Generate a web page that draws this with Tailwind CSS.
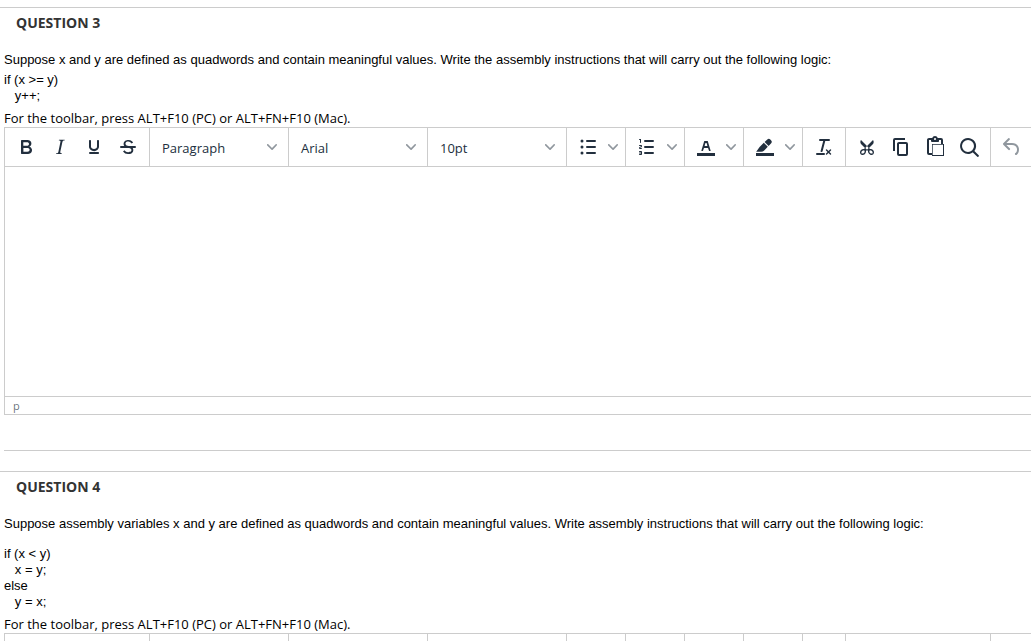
<!DOCTYPE html>
<html lang="en">
<head>
<meta charset="utf-8">
<title>Test questions</title>
<script src="https://cdn.jsdelivr.net/npm/@tailwindcss/browser@4"></script>
</head>
<body class="h-screen overflow-hidden bg-white font-['Open_Sans','Noto_Sans',sans-serif] text-[13px] text-black">

<svg class="hidden" aria-hidden="true">
  <symbol id="bold" viewBox="0 0 24 24"><path fill-rule="evenodd" d="M7.8 19c-.3 0-.5 0-.6-.2l-.2-.5V5.7c0-.2 0-.4.2-.5l.6-.2h5c1.5 0 2.7.3 3.5 1 .7.6 1.1 1.4 1.1 2.5a3 3 0 01-.6 1.9c-.4.6-1 1-1.6 1.2.4.1.9.3 1.3.6s.8.7 1 1.2c.4.4.5 1 .5 1.6 0 1.3-.4 2.3-1.3 3-.8.7-2.1 1-3.8 1H7.8zm5-8.3c.6 0 1.2-.1 1.6-.5.4-.3.6-.7.6-1.3 0-1.1-.8-1.7-2.3-1.7H9.3v3.5h3.4zm.5 6c.7 0 1.3-.1 1.7-.4.4-.4.6-.9.6-1.5s-.2-1-.7-1.4c-.4-.3-1-.4-2-.4H9.4v3.8h4z"/></symbol>
  <symbol id="italic" viewBox="0 0 24 24"><path fill-rule="evenodd" d="M16.7 4.7l-.1.9h-.3c-.6 0-1 0-1.4.3-.3.3-.4.6-.5 1.1l-2.1 9.8v.6c0 .5.4.8 1.4.8h.2l-.2.8H8l.2-.8h.2c1.1 0 1.8-.5 2-1.5l2-9.8.1-.5c0-.6-.4-.8-1.4-.8h-.3l.2-.9h5.8z"/></symbol>
  <symbol id="underline" viewBox="0 0 24 24"><path fill-rule="evenodd" d="M16 5c.6 0 1 .4 1 1v5.5a4 4 0 01-.4 1.8l-1 1.4a5.3 5.3 0 01-5.5 1 5 5 0 01-1.6-1c-.5-.4-.8-.9-1.1-1.4a4 4 0 01-.4-1.8V6c0-.6.4-1 1-1s1 .4 1 1v5.5c0 .3 0 .6.2 1l.6.7a3.3 3.3 0 002.2.8 3.4 3.4 0 002.2-.8c.3-.2.4-.5.6-.8l.2-.9V6c0-.6.4-1 1-1zM8 17h8c.6 0 1 .4 1 1s-.4 1-1 1H8a1 1 0 010-2z"/></symbol>
  <symbol id="strike" viewBox="0 0 24 24"><path d="M15.6 8.5c-.5-.7-1-1.1-1.3-1.3-.6-.4-1.3-.6-2-.6-2.7 0-2.8 1.7-2.8 2.1 0 1.6 1.8 2 3.2 2.3 4.4.9 4.6 2.8 4.6 3.9 0 1.4-.7 4.1-5 4.1A6.2 6.2 0 017 16.4l1.5-1.1c.4.6 1.6 2 3.7 2 1.6 0 2.5-.4 3-1.2.4-.8.3-2-.8-2.6-.7-.4-1.6-.7-2.9-1-1-.2-3.9-.8-3.9-3.6C7.6 6 10.3 5 12.4 5c2.9 0 4.2 1.6 4.7 2.4l-1.5 1.1z"/><path d="M5 11h14a1 1 0 010 2H5a1 1 0 010-2z"/></symbol>
  <symbol id="bullets" viewBox="0 0 24 24"><path d="M11 5h8a1 1 0 010 2h-8a1 1 0 010-2zm0 6h8a1 1 0 010 2h-8a1 1 0 010-2zm0 6h8a1 1 0 010 2h-8a1 1 0 010-2z"/><circle cx="6" cy="6" r="1.5"/><circle cx="6" cy="12" r="1.5"/><circle cx="6" cy="18" r="1.5"/></symbol>
  <symbol id="numbers" viewBox="0 0 24 24"><path fill-rule="evenodd" d="M10 17h8a1 1 0 010 2h-8a1 1 0 010-2zm0-6h8a1 1 0 010 2h-8a1 1 0 010-2zm0-6h8a1 1 0 010 2h-8a1 1 0 010-2zM6 4v3.5c0 .3-.2.5-.5.5a.5.5 0 01-.5-.5V5h-.5a.5.5 0 010-1H6zm-1 8.8l.2.2h1.3c.3 0 .5.2.5.5s-.2.5-.5.5H4.9a1 1 0 01-.9-1V13c0-.4.3-.8.6-1l1.2-.4.2-.3a.2.2 0 00-.2-.2H4.5a.5.5 0 01-.5-.5c0-.3.2-.5.5-.5h1.6c.5 0 .9.4.9 1v.1c0 .4-.3.8-.6 1l-1.2.4-.2.3zM7 17v2c0 .6-.4 1-1 1H4.5a.5.5 0 010-1h1.2c.2 0 .3-.1.3-.3 0-.2-.1-.3-.3-.3H4.4a.4.4 0 110-.8h1.3c.2 0 .3-.1.3-.3 0-.2-.1-.3-.3-.3H4.5a.5.5 0 110-1H6c.6 0 1 .4 1 1z"/></symbol>
  <symbol id="color" viewBox="0 0 24 24"><path fill-rule="evenodd" d="M3 18h18v3H3zM8.7 16h-.8a.5.5 0 01-.5-.6l2.7-9c.1-.3.3-.4.5-.4h2.8c.2 0 .4.1.5.4l2.7 9a.5.5 0 01-.5.6h-.8a.5.5 0 01-.4-.4l-.7-2.2c0-.3-.3-.4-.5-.4h-3.4c-.2 0-.4.1-.5.4l-.7 2.2c0 .3-.2.4-.4.4zm2.6-7.6l-.6 2a.5.5 0 00.5.6h1.6a.5.5 0 00.5-.6l-.6-2c0-.3-.3-.4-.5-.4h-.4c-.2 0-.4.1-.5.4z"/></symbol>
  <symbol id="highlight" viewBox="0 0 24 24"><path d="M3 18h18v3H3zM3.2 16.8l3.4-4.8 4.2-4.2 4 4-3.6 3.8c-.8.8-1.800 1.200-3 1.200zM11.600 7l2.700-2.500a2.200 2.200 0 013 0l.9.9c.8.8.8 2.100 0 2.900L15.600 11z"/></symbol>
  <symbol id="clear" viewBox="0 0 24 24"><path fill-rule="evenodd" d="M13.2 6a1 1 0 010 .2l-2.6 10a1 1 0 01-1 .8h-.2a.8.8 0 01-.8-1l2.6-10H8a1 1 0 110-2h9a1 1 0 010 2h-3.8zM5 18h7a1 1 0 010 2H5a1 1 0 010-2zm13 1.5L16.5 18 15 19.5a.7.7 0 01-1-1l1.5-1.5-1.5-1.5a.7.7 0 011-1l1.5 1.5 1.5-1.5a.7.7 0 011 1L17.5 17l1.5 1.5a.7.7 0 01-1 1z"/></symbol>
  <symbol id="cut" viewBox="0 0 24 24"><path fill-rule="evenodd" d="M18 15c.6.7 1 1.4 1 2.3 0 .8-.2 1.5-.7 2l-.8.5-1 .2c-.4 0-.8 0-1.2-.3a3.9 3.9 0 01-2.1-2.2c-.2-.5-.3-1-.2-1.5l-1-1-1 1c0 .5 0 1-.2 1.5-.1.5-.4 1-.9 1.4-.3.4-.7.6-1.2.8l-1.2.3c-.4 0-.7 0-1-.2-.3 0-.6-.3-.8-.5-.5-.5-.8-1.2-.7-2 0-.9.4-1.6 1-2.2A3.7 3.7 0 018.6 14H9l1-1-4-4-.5-1a3.3 3.3 0 010-2c0-.4.3-.7.5-1l6 6 6-6 .5 1a3.3 3.3 0 010 2c0 .4-.3.7-.5 1l-4 4 1 1h.5c.4 0 .8 0 1.2.3.5.2.9.4 1.2.8zm-8.5 2.2l.1-.4v-.3-.4a1 1 0 00-.2-.5 1 1 0 00-.4-.2 1.6 1.6 0 00-.8 0 2.6 2.6 0 00-.8.3 2.5 2.5 0 00-.9 1.1l-.1.4v.7l.2.5.5.2h.7a2.5 2.5 0 00.8-.3 2.8 2.8 0 001-1zm2.5-2.8c.4 0 .7-.1 1-.4.3-.3.4-.6.4-1s-.1-.7-.4-1c-.3-.3-.6-.4-1-.4s-.7.1-1 .4c-.3.3-.4.6-.4 1s.1.7.4 1c.3.3.6.4 1 .4zm5.4 4l.2-.5v-.4-.3a2.6 2.6 0 00-.3-.8 2.4 2.4 0 00-.7-.7 2.5 2.5 0 00-.8-.3 1.5 1.5 0 00-.8 0 1 1 0 00-.4.2 1 1 0 00-.2.5 1.5 1.5 0 000 .7v.4l.3.4.3.4a2.8 2.8 0 00.8.5l.4.1h.7l.5-.2z"/></symbol>
  <symbol id="copy" viewBox="0 0 24 24"><path fill-rule="evenodd" d="M16 3H6a2 2 0 00-2 2v11h2V5h10V3zm1 4a2 2 0 012 2v10a2 2 0 01-2 2h-7a2 2 0 01-2-2V9c0-1.2.9-2 2-2h7zm0 12V9h-7v10h7z"/></symbol>
  <symbol id="paste" viewBox="0 0 24 24"><path fill-rule="evenodd" d="M18 9V5h-2v1c0 .6-.4 1-1 1H9a1 1 0 01-1-1V5H6v13h3V9h9zM9 20H6a2 2 0 01-2-2V5c0-1.1.9-2 2-2h3.2A3 3 0 0112 1a3 3 0 012.800 2H18a2 2 0 012 2v4h1v12H9v-1zm.700-10.300V20H20V9.700H9.700zM12 3a1 1 0 00-1 1c0 .5.4 1 1 1s1-.5 1-1-.4-1-1-1z"/></symbol>
  <symbol id="search" viewBox="0 0 24 24"><path fill-rule="evenodd" d="M16 17.3a8 8 0 111.4-1.4l4.3 4.4a1 1 0 01-1.4 1.4l-4.4-4.3zm-5-.3a6 6 0 100-12 6 6 0 000 12z"/></symbol>
  <symbol id="undo" viewBox="0 0 24 24"><path d="M6.4 8H12c3.7 0 6.2 2 6.8 5.1.6 2.7-.4 5.6-2.3 6.8a1 1 0 01-1-1.8c1.1-.6 1.8-2.7 1.4-4.6-.5-2.1-2.1-3.5-4.9-3.5H6.4l3.3 3.3a1 1 0 11-1.4 1.4l-5-5a1 1 0 010-1.4l5-5a1 1 0 011.4 1.4L6.4 8z"/></symbol>
  <symbol id="chevron" viewBox="0 0 10 10"><path d="M8.7 2.2c.3-.3.8-.3 1 0 .4.4.4.9 0 1.2L5.7 7.8c-.3.3-.9.3-1.2 0L.2 3.4a.8.8 0 010-1.2c.3-.3.8-.3 1.1 0L5 6l3.7-3.8z"/></symbol>
</svg>

<main class="pt-[7px]">
  <section class="border-t border-[#ccc]">
    <h2 class="px-4 pt-1.5 text-sm leading-[18px] font-bold text-[#333]">QUESTION 3</h2>
    <div class="pl-1">
      <div class="pt-5 font-['Liberation_Sans',Arial,sans-serif] leading-4">
        <p>Suppose x and y are defined as quadwords and contain meaningful values. Write the assembly instructions that will carry out the following logic:</p>
        <p class="pt-1">if (x &gt;= y)<br>&nbsp;&nbsp; y++;</p>
      </div>
      <p class="pt-[5px] leading-[18px]">For the toolbar, press ALT+F10 (PC) or ALT+FN+F10 (Mac).</p>
      <div data-editor class="overflow-hidden border-y border-l border-[#ccc]">
        <div data-toolbar role="toolbar" aria-label="Formatting" class="flex divide-x divide-[#ccc] border-b border-[#ccc] text-[#222f3e] fill-[#222f3e]">
          <div class="flex h-[38px] shrink-0 px-1 py-0.5">
            <button aria-label="Bold" class="grid size-[34px] place-items-center"><svg class="size-6"><use href="#bold"/></svg></button>
            <button aria-label="Italic" class="grid size-[34px] place-items-center"><svg class="size-6"><use href="#italic"/></svg></button>
            <button aria-label="Underline" class="grid size-[34px] place-items-center"><svg class="size-6"><use href="#underline"/></svg></button>
            <button aria-label="Strikethrough" class="grid size-[34px] place-items-center"><svg class="size-6"><use href="#strike"/></svg></button>
          </div>
          <div class="shrink-0 px-1 py-0.5"><button aria-label="Blocks" class="flex h-[34px] w-[130px] items-center justify-between pr-[7px] pl-2"><span class="pt-1">Paragraph</span><svg class="size-[10px] fill-[#222f3e]/50"><use href="#chevron"/></svg></button></div>
          <div class="shrink-0 px-1 py-0.5"><button aria-label="Fonts" class="flex h-[34px] w-[130px] items-center justify-between pr-[7px] pl-2"><span class="pt-1">Arial</span><svg class="size-[10px] fill-[#222f3e]/50"><use href="#chevron"/></svg></button></div>
          <div class="shrink-0 px-1 py-0.5"><button aria-label="Font sizes" class="flex h-[34px] w-[130px] items-center justify-between pr-[7px] pl-2"><span class="pt-1">10pt</span><svg class="size-[10px] fill-[#222f3e]/50"><use href="#chevron"/></svg></button></div>
          <div class="flex shrink-0 px-1 py-0.5">
            <button aria-label="Bullet list" class="grid size-[34px] place-items-center"><svg class="size-6"><use href="#bullets"/></svg></button>
            <button aria-label="Bullet list styles" class="grid h-[34px] w-4 place-items-center"><svg class="size-[10px] fill-[#222f3e]/50"><use href="#chevron"/></svg></button>
          </div>
          <div class="flex shrink-0 px-1 py-0.5">
            <button aria-label="Numbered list" class="grid size-[34px] place-items-center"><svg class="size-6"><use href="#numbers"/></svg></button>
            <button aria-label="Numbered list styles" class="grid h-[34px] w-4 place-items-center"><svg class="size-[10px] fill-[#222f3e]/50"><use href="#chevron"/></svg></button>
          </div>
          <div class="flex shrink-0 px-1 py-0.5">
            <button aria-label="Text color" class="grid size-[34px] place-items-center"><svg class="size-6"><use href="#color"/></svg></button>
            <button aria-label="Text color choices" class="grid h-[34px] w-4 place-items-center"><svg class="size-[10px] fill-[#222f3e]/50"><use href="#chevron"/></svg></button>
          </div>
          <div class="flex shrink-0 px-1 py-0.5">
            <button aria-label="Highlight color" class="grid size-[34px] place-items-center"><svg class="size-6"><use href="#highlight"/></svg></button>
            <button aria-label="Highlight color choices" class="grid h-[34px] w-4 place-items-center"><svg class="size-[10px] fill-[#222f3e]/50"><use href="#chevron"/></svg></button>
          </div>
          <div class="flex shrink-0 px-1 py-0.5">
            <button aria-label="Clear formatting" class="grid size-[34px] place-items-center"><svg class="size-6"><use href="#clear"/></svg></button>
          </div>
          <div class="flex shrink-0 px-1 py-0.5">
            <button aria-label="Cut" class="grid size-[34px] place-items-center"><svg class="size-6"><use href="#cut"/></svg></button>
            <button aria-label="Copy" class="grid size-[34px] place-items-center"><svg class="size-6"><use href="#copy"/></svg></button>
            <button aria-label="Paste" class="grid size-[34px] place-items-center"><svg class="size-6"><use href="#paste"/></svg></button>
            <button aria-label="Find and replace" class="grid size-[34px] place-items-center"><svg class="size-6"><use href="#search"/></svg></button>
          </div>
          <div class="flex shrink-0 px-1 py-0.5">
            <button aria-label="Undo" disabled class="grid size-[34px] place-items-center"><svg class="size-6 fill-[#222f3e]/50"><use href="#undo"/></svg></button>
          </div>
        </div>
        <textarea aria-label="Answer to question 3" class="block h-[229px] w-full resize-none p-2 outline-none"></textarea>
        <div class="border-t border-[#ccc] px-2 text-[11px] leading-[17px] text-[#222f3e]/70">p</div>
      </div>
      <hr class="mt-[35px] border-[#ccc]">
    </div>
  </section>

  <section class="mt-5 border-t border-[#ccc]">
    <h2 class="px-4 pt-1.5 text-sm leading-[18px] font-bold text-[#333]">QUESTION 4</h2>
    <div class="pl-1">
      <div class="pt-5 font-['Liberation_Sans',Arial,sans-serif] leading-4">
        <p>Suppose assembly variables x and y are defined as quadwords and contain meaningful values. Write assembly instructions that will carry out the following logic:</p>
        <p class="pt-3.5">if (x &lt; y)<br>&nbsp;&nbsp; x = y;<br>else<br>&nbsp;&nbsp; y = x;</p>
      </div>
      <p class="pt-[5px] leading-[18px]">For the toolbar, press ALT+F10 (PC) or ALT+FN+F10 (Mac).</p>
      <div id="editor-4"></div>
    </div>
  </section>
</main>

<script>
  // Both questions use the same editor.
  const editor = document.querySelector('[data-editor]').cloneNode(true);
  editor.querySelector('textarea').setAttribute('aria-label', 'Answer to question 4');
  document.getElementById('editor-4').replaceWith(editor);
</script>
</body>
</html>
